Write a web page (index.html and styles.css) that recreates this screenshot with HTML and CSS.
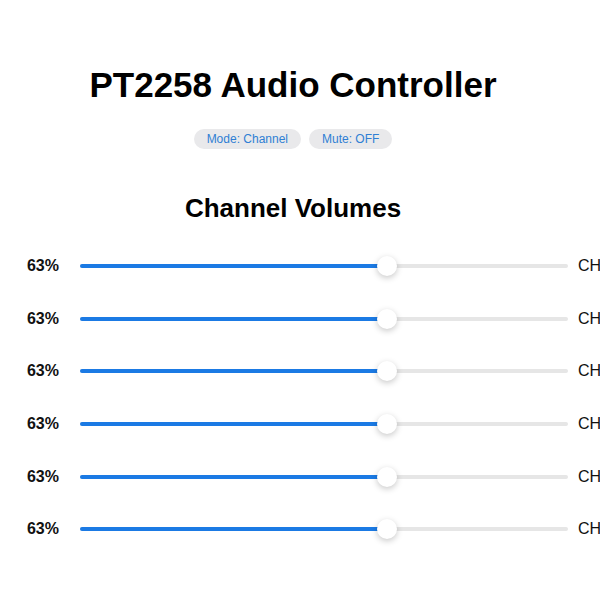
FILE: index.html
```html
<!DOCTYPE html>
<html>
<head>
<meta charset="utf-8">
<link rel="stylesheet" href="styles.css">
</head>
<body>
<div class="app">
  <h1 class="title">PT2258 Audio Controller</h1>
  <div class="badges">
    <span class="badge">Mode: Channel</span>
    <span class="badge">Mute: OFF</span>
  </div>
  <h2 class="section">Channel Volumes</h2>
  <div class="rows">
    <div class="row"><span class="pct">63%</span><div class="slider"><div class="fill" style="width:63%"><span class="thumb"></span></div></div><span class="ch">CH1</span></div>
    <div class="row"><span class="pct">63%</span><div class="slider"><div class="fill" style="width:63%"><span class="thumb"></span></div></div><span class="ch">CH2</span></div>
    <div class="row"><span class="pct">63%</span><div class="slider"><div class="fill" style="width:63%"><span class="thumb"></span></div></div><span class="ch">CH3</span></div>
    <div class="row"><span class="pct">63%</span><div class="slider"><div class="fill" style="width:63%"><span class="thumb"></span></div></div><span class="ch">CH4</span></div>
    <div class="row"><span class="pct">63%</span><div class="slider"><div class="fill" style="width:63%"><span class="thumb"></span></div></div><span class="ch">CH5</span></div>
    <div class="row"><span class="pct">63%</span><div class="slider"><div class="fill" style="width:63%"><span class="thumb"></span></div></div><span class="ch">CH6</span></div>
  </div>
</div>
</body>
</html>
```
FILE: styles.css
```css
html, body {
  margin: 0;
  padding: 0;
  background: #ffffff;
  overflow: hidden;
}
body {
  font-family: "Liberation Sans", Arial, sans-serif;
  color: #111;
}
.app {
  width: 586px;
  text-align: center;
  padding-top: 64px;
}
.title {
  margin: 0;
  font-size: 35px;
  font-weight: bold;
  line-height: 42px;
  color: #000;
}
.badges {
  display: flex;
  justify-content: center;
  gap: 8px;
  margin-top: 23px;
}
.badge {
  display: inline-block;
  background: #e9e9eb;
  color: #2f7fd4;
  font-size: 12px;
  line-height: 20px;
  height: 20px;
  padding: 0 13px;
  border-radius: 10px;
}
.section {
  margin: 44px 0 0;
  font-size: 26px;
  font-weight: bold;
  line-height: 30px;
  color: #000;
}
.rows {
  margin-top: 17px;
}
.row {
  display: flex;
  align-items: center;
  height: 52.6px;
  white-space: nowrap;
}
.pct {
  flex: none;
  width: 80px;
  text-align: right;
  font-size: 16px;
  font-weight: bold;
  padding-right: 21px;
  box-sizing: border-box;
}
.slider {
  position: relative;
  width: 488px;
  flex: none;
  height: 4px;
  background: #e6e6e6;
  border-radius: 2px;
}
.fill {
  position: relative;
  height: 4px;
  background: #1b7ae4;
  border-radius: 2px;
}
.thumb {
  position: absolute;
  right: -10px;
  top: -8px;
  width: 20px;
  height: 20px;
  border-radius: 50%;
  background: #fff;
  box-shadow: 0 2px 6px rgba(0,0,0,0.22);
}
.ch {
  flex: none;
  margin-left: 10px;
  font-size: 16px;
}
```
